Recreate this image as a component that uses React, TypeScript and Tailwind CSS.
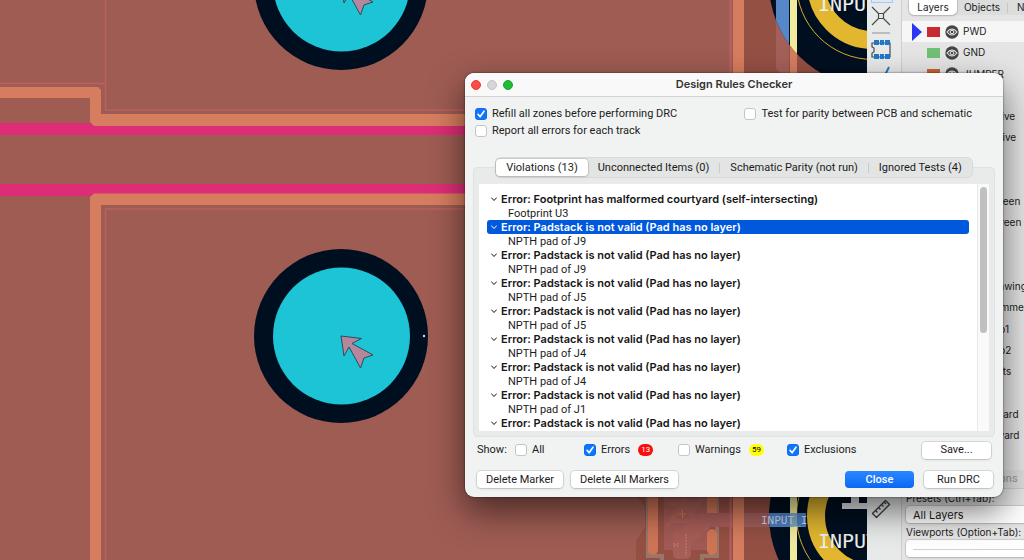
import React, { useState } from "react";

function Check({ checked }: { checked?: boolean }) {
  return (
    <span className="grid size-3 shrink-0">
      <input
        type="checkbox"
        defaultChecked={checked}
        className="peer col-start-1 row-start-1 size-3 appearance-none rounded-[3px] border border-[#c4c6c6] bg-white checked:border-[#0a6cf5] checked:bg-[#0f75fb]"
      />
      <svg
        viewBox="0 0 12 12"
        className="pointer-events-none col-start-1 row-start-1 hidden size-3 peer-checked:block"
        fill="none"
        stroke="white"
        strokeWidth="1.6"
        strokeLinecap="round"
        strokeLinejoin="round"
      >
        <path d="M3 6.3 5.1 8.8 9 3.2" />
      </svg>
    </span>
  );
}

function Option({ label, checked }: { label: string; checked?: boolean }) {
  return (
    <label className="flex items-center gap-[5px] whitespace-nowrap">
      <Check checked={checked} />
      {label}
    </label>
  );
}

function PushButton({ children, primary, className }: { children: React.ReactNode; primary?: boolean; className: string }) {
  const tone = primary
    ? "bg-gradient-to-b from-[#2a87ff] to-[#0868f5] text-white font-medium"
    : "bg-white text-[#1c1c1c] ring-1 ring-black/10 shadow-sm";
  return (
    <button type="button" className={`h-[17px] rounded-[4px] text-center leading-4 ${tone} ${className}`}>
      {children}
    </button>
  );
}

function Pointer({ y }: { y: number }) {
  return (
    <g transform={`translate(341 ${y})`} fill="#b5879c" stroke="#234f60" strokeWidth="1" strokeLinejoin="miter">
      <path d="M0 0 L20.500 2.500 L11 7.500 L32 19 L23 22 L19.500 32 L8 11 L3 20 Z" />
    </g>
  );
}

function Hole({ y }: { y: number }) {
  return (
    <g>
      <circle cx="341" cy={y} r="87" fill="#000f20" />
      <circle cx="341.500" cy={y} r="68.500" fill="#1cc4d5" />
      <Pointer y={y} />
    </g>
  );
}

function Ring({ y }: { y: number }) {
  return (
    <g>
      <circle cx="873" cy={y} r="104" fill="#000f20" />
      <circle cx="873" cy={y} r="76.500" fill="none" stroke="#d9ae2c" strokeWidth="1" />
      <circle cx="873" cy={y} r="57" fill="none" stroke="#e2b72f" strokeWidth="18" />
    </g>
  );
}

function Board() {
  return (
    <svg viewBox="0 0 867 560" preserveAspectRatio="xMinYMin slice" className="absolute inset-0 size-full" aria-label="Board">
      <defs>
        <clipPath id="rings">
          <circle cx="873" cy="-17" r="104" />
          <circle cx="873" cy="516" r="104" />
        </clipPath>
      </defs>
      <rect width="867" height="560" fill="#9e5c53" />
      <g fill="none" stroke="#ba6160" strokeWidth="1.500">
        <path d="M0 83.500H105.500M105.500 0V110H728" />
        <path d="M105.500 560V209H728" />
      </g>
      <path d="M0 123h867v12H0zM0 184h867v12H0z" fill="#de2d77" />
      <path d="M0 87H98L101 90V114H740V126H94L90 122V98H0Z" fill="#d67d5f" />
      <path d="M90 560V197L94 193.500H740V205H101V560Z" fill="#d67d5f" />

      <path d="M636 560V480H867V560Z" fill="#955044" />
      <path d="M636 495l9 12v20l-9 14" fill="#9e5c53" />
      <path d="M664 490h46v60h-46z" fill="#a15a55" />
      <path d="M667 527l16-26 8 12 12-16M667 504h34M672 521l12-15 12 15z" fill="none" stroke="#a85f56" strokeWidth="4" />
      <path d="M648 490v66h14v4M717 490v66h-15v4" fill="none" stroke="#98766a" strokeWidth="4" />
      <path d="M648 490h10v60a5 5 0 0 1-10 0zM707 490h10v24h-10zM707 533q5-8 10 0v17a5 5 0 0 1-10 0z" fill="#cf7556" />
      <path d="M673 535q0-5 8-5l20-17h66v14h-56l-20 17v10q0 5-6 5h-6q-6 0-6-5z" fill="#a75d58" />
      <path d="M682.500 510v8M678.500 514h8" stroke="#db754b" strokeWidth="1" />
      <path d="M674 543v4l4-4v4M686 534v22" fill="none" stroke="#c38374" strokeWidth="1" strokeDasharray="2 1" />

      <rect x="744" width="123" height="560" fill="#955044" />
      <path d="M730.500 0V560" stroke="#bc6262" strokeWidth="2" />
      <path d="M733 0h11v560h-11z" fill="#d67d5f" />
      <path d="M776 0h13v73h-9l-4-5z" fill="#a36059" />
      <path d="M790 0h7v73h-7z" fill="#d67d5f" />
      <path d="M744 513h30v14h-30z" fill="#a15f5c" />
      <Ring y={-17} />
      <Ring y={516} />
      <g clipPath="url(#rings)">
        <path d="M776 0h13v73h-13z" fill="#5688c9" />
        <path d="M790 0h7v73h-7zM790 490h7v70h-7z" fill="#f1eb9e" />
        <path d="M760 513h46v14h-46z" fill="#4b7fc0" />
      </g>
      <path d="M790 513h7v14h-7z" fill="#81a7bd" />
      <path d="M842 503h9v-13h8v13h8v6h-25z" fill="#e1e3e6" />
      <g fill="#eeeeee" fontFamily="DejaVu Sans Mono, monospace">
        <text x="818" y="11" fontSize="20">INPU</text>
        <text x="818" y="548" fontSize="20">INPUT</text>
        <text x="761" y="524" fontSize="11" fill="#c5d7ec">INPUT_I</text>
      </g>
      <Hole y={-17} />
      <Hole y={336} />
      <circle cx="424" cy="336" r="1.200" fill="#d9dadc" />
    </svg>
  );
}

function ToolStrip() {
  return (
    <div className="flex w-[35px] shrink-0 flex-col border-r border-[#cfcfcf] bg-[#e8e9e9] pl-1">
      <div className="h-[3px] w-[22px] border border-t-0 border-[#a9c8ec] bg-[#dbe8f7]" />
      <button type="button" aria-label="Ratsnest" className="mt-[3px] size-[20px]">
        <svg viewBox="0 0 20 20" fill="none" stroke="#4b4b4b" strokeWidth="1.200">
          <path d="M1 1l7 7M12 8l7-7M1 19l7-7M12 12l7 7" />
          <rect x="7.500" y="7.500" width="5" height="5" rx="1" />
        </svg>
      </button>
      <div className="ml-px mt-[6px] h-[2px] w-[18px] bg-[#bdbdbd]" />
      <button type="button" aria-label="Footprints" className="mt-[5px] h-[22px] w-[20px]">
        <svg viewBox="0 0 20 22" fill="none">
          <path d="M1 4h18v14H1v-4l2-1v-4l-2-1z" stroke="#4b4b4b" strokeWidth="1.200" />
          <path d="M3 1h5v5H3zM9 1h4v5H9zM14 1h5v5h-5zM3 15h5v5H3zM9 15h4v5H9zM14 15h5v5h-5z" fill="#1f77ca" />
        </svg>
      </button>
      <button type="button" aria-label="Tracks" className="mt-[5px] size-[20px]">
        <svg viewBox="0 0 20 20"><path d="M18 1L11 15" stroke="#1f77d0" strokeWidth="2" /></svg>
      </button>
      <button type="button" aria-label="Measure" className="mt-[413px] size-[20px]">
        <svg viewBox="0 0 20 20" fill="none" stroke="#3f3f3f" strokeWidth="1.400" strokeLinejoin="round">
          <path d="M1.500 14.500L14.500 1.500l4 4L5.500 18.500zM4.500 11.500l2 2M7.500 8.500l2 2M10.500 5.500l2 2M13 3l2 2" />
        </svg>
      </button>
    </div>
  );
}

const layers = [
  { name: "PWD", color: "bg-[#c62b2e]" },
  { name: "GND", color: "bg-[#6fc173]" },
  { name: "JUMPER", color: "bg-[#c86433]" },
  { name: "SIG", color: "bg-[#4d7fc4]" },
  { name: "F.Adhesive", color: "bg-[#840084]" },
  { name: "B.Adhesive", color: "bg-[#000084]" },
  { name: "F.Paste", color: "bg-[#b4a09a]" },
  { name: "B.Paste", color: "bg-[#00c2c2]" },
  { name: "F.Silkscreen", color: "bg-[#f2eda1]" },
  { name: "B.Silkscreen", color: "bg-[#e8b2a7]" },
  { name: "F.Mask", color: "bg-[#d864ff]" },
  { name: "B.Mask", color: "bg-[#02ffee]" },
  { name: "User.Drawings", color: "bg-[#c2c2c2]" },
  { name: "User.Comments", color: "bg-[#5994dc]" },
  { name: "User.Eco1", color: "bg-[#b4dbd2]" },
  { name: "User.Eco2", color: "bg-[#d8c852]" },
  { name: "Edge.Cuts", color: "bg-[#d0d2cd]" },
  { name: "Margin", color: "bg-[#ff26e2]" },
  { name: "F.Courtyard", color: "bg-[#ff26e2]" },
  { name: "B.Courtyard", color: "bg-[#26e9ff]" },
];

function Eye() {
  return (
    <svg viewBox="0 0 14 14" className="size-[14px] shrink-0">
      <circle cx="7" cy="7" r="6.700" fill="#464646" />
      <path d="M2 7q5-6 10 0q-5 6-10 0z" fill="none" stroke="#eee" strokeWidth="1.100" />
      <circle cx="7" cy="7" r="1.800" fill="#464646" stroke="#eee" strokeWidth="1" />
    </svg>
  );
}

function Appearance() {
  return (
    <aside className="flex w-[122px] shrink-0 flex-col overflow-hidden whitespace-nowrap bg-[#e5e5e5]">
      <div className="ml-[7px] flex h-[15px] w-[180px] items-center rounded-b-[5px] bg-[#dcdddd] font-['Inter'] text-[10px]">
        <button type="button" className="h-[15px] w-12 rounded-b-[5px] bg-white pb-[2px] leading-[12px] shadow ring-1 ring-black/10">Layers</button>
        <button type="button" className="w-[50px] pb-[2px] leading-[12px]">Objects</button>
        <span className="h-[10px] w-px bg-[#c5c5c5]" />
        <button type="button" className="pb-[2px] pl-[9px] leading-[12px]">Nets</button>
      </div>
      <ul className="mt-[6px] flex h-[425px] flex-col font-['Inter'] text-[10px]">
        {layers.map((l, i) => (
          <li key={l.name} className={`flex flex-1 items-center pl-[10px] ${i === 0 ? "bg-[#f6f6f6]" : ""}`}>
            <svg viewBox="0 0 10 20" className="h-[20px] w-[10px] shrink-0">
              {i === 0 && <path d="M0 1l10 9-10 9z" fill="#2b35f5" />}
            </svg>
            <span className={`ml-[5px] h-[10px] w-[13px] shrink-0 ${l.color}`} />
            <span className="mx-1 ml-[5px] flex"><Eye /></span>
            <span className="-mr-10">{l.name}</span>
          </li>
        ))}
      </ul>
      <button type="button" className="mt-6 h-[19px] border-b border-[#cbcbcb] bg-[#dedede] pl-[10px] text-left text-[11px] text-[#989898]">
        Layer Display Options
      </button>
      <div className="flex flex-col pl-1 font-['Inter'] text-[10px]">
        <label htmlFor="presets" className="mt-[2px] h-[15px] leading-[15px]">Presets (Ctrl+Tab):</label>
        <select id="presets" className="h-[17px] w-40 appearance-none rounded-[4px] bg-white pl-[7px] text-[11px] leading-4 shadow-sm ring-1 ring-black/10">
          <option>All Layers</option>
        </select>
        <label htmlFor="viewports" className="mt-[1px] h-[16px] leading-[17px]">Viewports (Option+Tab):</label>
        <select id="viewports" className="h-[17px] w-40 appearance-none rounded-[4px] bg-white pl-[7px] text-[11px] leading-4 text-[#c8c8c8] shadow-sm ring-1 ring-black/10">
          <option>────────────────</option>
        </select>
      </div>
    </aside>
  );
}

const padError = "Error: Padstack is not valid (Pad has no layer)";
const violations = [
  { title: "Error: Footprint has malformed courtyard (self-intersecting)", item: "Footprint U3" },
  { title: padError, item: "NPTH pad of J9" },
  { title: padError, item: "NPTH pad of J9" },
  { title: padError, item: "NPTH pad of J5" },
  { title: padError, item: "NPTH pad of J5" },
  { title: padError, item: "NPTH pad of J4" },
  { title: padError, item: "NPTH pad of J4" },
  { title: padError, item: "NPTH pad of J1" },
  { title: padError, item: "NPTH pad of J1" },
];

const tabs = ["Violations (13)", "Unconnected Items (0)", "Schematic Parity (not run)", "Ignored Tests (4)"];

function Checker() {
  const [tab, setTab] = useState(0);
  const [selected, setSelected] = useState(1);
  return (
    <section
      role="dialog"
      aria-labelledby="drc-title"
      className="absolute left-[465px] top-[73px] flex w-[538px] flex-col overflow-hidden rounded-[9px] bg-[#f1f3f2] shadow-[0_14px_34px_rgba(0,0,0,0.55),0_0_2px_rgba(0,0,0,0.7)]"
    >
      <header className="flex h-6 items-center border-b border-[#d3d3d3] bg-[#f9f9f9] px-[6px]">
        <div className="flex w-12 gap-[6px]">
          <button type="button" aria-label="Close window" className="size-[10px] rounded-full border border-[#dd4138] bg-[#fb4b47]" />
          <button type="button" aria-label="Minimize" className="size-[10px] rounded-full border border-[#c3c3c3] bg-[#d6d6d6]" />
          <button type="button" aria-label="Zoom" className="size-[10px] rounded-full border border-[#1ca52e] bg-[#22b936]" />
        </div>
        <h1 id="drc-title" className="flex-1 pr-12 text-center font-['Inter'] font-semibold text-[#333]">Design Rules Checker</h1>
      </header>

      <div className="flex justify-between pl-[10px] pr-[31px] pt-[9px]">
        <div className="flex flex-col gap-px leading-4">
          <Option label="Refill all zones before performing DRC" checked />
          <Option label="Report all errors for each track" />
        </div>
        <div className="leading-4">
          <Option label="Test for parity between PCB and schematic" />
        </div>
      </div>

      <div className="mx-2 mt-[19px] flex flex-col">
        <div role="tablist" className="z-10 flex h-[19px] items-center self-center rounded-[5px] bg-[#e3e4e4] ring-1 ring-[#d9dada]">
          {tabs.map((t, i) => (
            <React.Fragment key={t}>
              {i > 1 && <span className="h-[10px] w-px bg-[#cacaca]" />}
              <button
                type="button"
                role="tab"
                aria-selected={tab === i}
                onClick={() => setTab(i)}
                className={`h-[17px] rounded-[4px] px-[10px] leading-[17px] ${tab === i ? "bg-white shadow ring-1 ring-black/10" : ""}`}
              >
                {t}
              </button>
            </React.Fragment>
          ))}
        </div>
        <div className="-mt-[10px] rounded-[4px] border border-[#e0e2e2] bg-[#e9ebeb] px-[5px] pb-[5px] pt-4">
          <div className="flex h-[247px] bg-white">
            <ul className="flex-1 overflow-hidden px-2 pt-[8px]">
              {violations.map((v, i) => (
                <li key={i}>
                  <button
                    type="button"
                    onClick={() => setSelected(i)}
                    className={`flex h-[14px] w-full items-center gap-1 rounded-[3px] pl-1 text-left font-['Inter'] font-semibold leading-[14px] ${selected === i ? "bg-[#0058dc] text-white" : "text-[#161616]"}`}
                  >
                    <svg viewBox="0 0 6 6" className="size-[6px]" fill="none" stroke="currentColor" strokeWidth="1" strokeLinecap="round">
                      <path d="M.5 1.800 3 4.500 5.500 1.800" />
                    </svg>
                    {v.title}
                  </button>
                  <div className="h-[14px] pl-[21px] leading-[16px]">{v.item}</div>
                </li>
              ))}
            </ul>
            <div className="w-3 border-l border-[#e8e8e8] bg-[#fafafa] px-[2px] pt-[3px]">
              <div className="h-[146px] w-[7px] rounded-full bg-[#c0c0c0]" />
            </div>
          </div>
        </div>
      </div>

      <div className="mt-1 flex h-[18px] items-center pl-3 pr-3">
        <span className="w-[38px]">Show:</span>
        <div className="w-[69px]"><Option label="All" /></div>
        <div className="flex w-[94px] items-center gap-2">
          <Option label="Errors" checked />
          <span className="flex h-3 w-[15px] items-center justify-center rounded-full bg-[#fc0d0d] text-[8px] text-white">13</span>
        </div>
        <div className="flex w-[109px] items-center gap-2">
          <Option label="Warnings" />
          <span className="flex h-3 w-[15px] items-center justify-center rounded-full bg-[#ffff0a] text-[8px] text-black">59</span>
        </div>
        <Option label="Exclusions" checked />
        <PushButton className="ml-auto w-[69px]">Save...</PushButton>
      </div>

      <div className="mb-[9px] mt-[12px] flex items-center gap-2 pl-3 pr-[10px]">
        <PushButton className="w-[86px]">Delete Marker</PushButton>
        <PushButton className="w-[107px]">Delete All Markers</PushButton>
        <PushButton primary className="ml-auto w-[69px]">Close</PushButton>
        <PushButton className="ml-[2px] w-[69px]">Run DRC</PushButton>
      </div>
    </section>
  );
}

export default function App() {
  return (
    <div className="relative flex h-screen overflow-hidden font-['Roboto','Liberation_Sans',sans-serif] text-[11px] text-[#1c1c1c]">
      <main className="relative flex-1 overflow-hidden">
        <Board />
      </main>
      <ToolStrip />
      <Appearance />
      <Checker />
    </div>
  );
}
